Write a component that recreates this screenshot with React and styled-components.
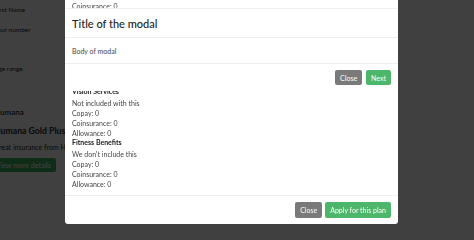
import React from 'react'
import styled, { createGlobalStyle } from 'styled-components'

const GlobalStyle = createGlobalStyle`
  html, body {
    margin: 0;
    padding: 0;
    background: #fff;
    overflow: hidden;
    font-family: Lato, "Open Sans", "Liberation Sans", sans-serif;
    color: #212529;
  }
`

const sections = [
  { title: 'Dental Services', note: 'Included with this', lines: ['Copay: 0', 'Coinsurance: 0', 'Allowance: 0'] },
  { title: 'Hearing Services', note: 'Not included with this', lines: ['Copay: 0', 'Coinsurance: 0', 'Allowance: 0', 'Deductible: 0'], gap: 5 },
  { title: 'Vision Services', note: 'Not included with this', lines: ['Copay: 0', 'Coinsurance: 0', 'Allowance: 0'] },
  { title: 'Fitness Benefits', note: "We don't include this", lines: ['Copay: 0', 'Coinsurance: 0', 'Allowance: 0'] }
]

export default function App() {
  return <>
    <GlobalStyle />
    <Page>
      <Label $gap={5}>First Name</Label>
      <Label $gap={10}>Your number</Label>
      <Label $gap={29}>Age range</Label>
      <Provider>Humana</Provider>
      <PlanName>Humana Gold Plus</PlanName>
      <Blurb>Great insurance from Humana for everyone</Blurb>
      <DetailsButton>View more details</DetailsButton>
    </Page>
    <Backdrop />
    <PlanModal>
      <ModalBody>
        {sections.map(s => <Section key={s.title} $gap={s.gap || 0}>
          <SectionTitle>{s.title}</SectionTitle>
          <Line>{s.note}</Line>
          {s.lines.map(l => <Line key={l}>{l}</Line>)}
        </Section>)}
      </ModalBody>
      <Footer $h={29}>
        <Button $variant="gray">Close</Button>
        <Button $variant="green">Apply for this plan</Button>
      </Footer>
    </PlanModal>
    <StepModal>
      <Header>
        <Title>Title of the modal</Title>
      </Header>
      <StepBody>Body of modal</StepBody>
      <Footer $h={28}>
        <Button $variant="gray" $small>Close</Button>
        <Button $variant="green" $small>Next</Button>
      </Footer>
    </StepModal>
  </>
}

const Page = styled.div`
  display: flex;
  flex-direction: column;
  align-items: flex-start;
  margin-left: -6px;
  width: 200px;
`

const Label = styled.div`
  margin-top: ${p => p.$gap}px;
  font-size: 6.5px;
  line-height: 10px;
`

const Provider = styled.div`
  margin-top: 33px;
  font-size: 8px;
  line-height: 10px;
  font-weight: 600;
`

const PlanName = styled.div`
  margin-top: 8px;
  font-size: 8.7px;
  line-height: 12px;
  font-weight: 700;
`

const Blurb = styled.div`
  margin-top: 5px;
  font-size: 7px;
  line-height: 10px;
  white-space: nowrap;
`

const DetailsButton = styled.div`
  margin-top: 6px;
  margin-left: -3px;
  height: 14px;
  padding: 0 5px;
  display: flex;
  align-items: center;
  background: #3fae5e;
  color: #fff;
  border-radius: 2px;
  font-size: 7px;
`

const Backdrop = styled.div`
  position: fixed;
  inset: 0;
  background: rgba(0, 0, 0, 0.75);
`

const PlanModal = styled.div`
  position: fixed;
  left: 65px;
  top: 0;
  height: 224px;
  width: 333px;
  overflow: hidden;
  display: flex;
  flex-direction: column;
  justify-content: flex-end;
  background: #fff;
  border-radius: 0 0 3px 3px;
`

const ModalBody = styled.div`
  flex-shrink: 0;
  padding: 0 7px 6px;
  display: flex;
  flex-direction: column;
`

const Section = styled.div`
  margin-top: ${p => p.$gap}px;
  display: flex;
  flex-direction: column;
`

const SectionTitle = styled.div`
  font-size: 7px;
  line-height: 8px;
  font-weight: 700;
  margin-bottom: 3px;
  color: #222;
`

const Line = styled.div`
  font-size: 7px;
  line-height: 10px;
  color: #444;
`

const Footer = styled.div`
  flex-shrink: 0;
  height: ${p => p.$h}px;
  box-sizing: border-box;
  border-top: 1px solid #eceeef;
  padding: 0 7px;
  display: flex;
  align-items: center;
  justify-content: flex-end;
  gap: ${p => p.$h === 29 ? 3 : 4}px;
`

const Button = styled.div`
  height: ${p => p.$small ? 15 : 16}px;
  padding: 0 5px;
  display: flex;
  align-items: center;
  border-radius: 2px;
  font-size: 7px;
  color: #fff;
  background: ${p => p.$variant === 'green' ? '#4cb66a' : '#7a7a7a'};
`

const StepModal = styled.div`
  position: fixed;
  top: 8px;
  left: 65px;
  width: 333px;
  background: #fff;
  border-top: 1px solid #f0f0f0;
  border-radius: 2px;
  box-sizing: border-box;
`

const Header = styled.div`
  height: 29px;
  box-sizing: border-box;
  padding: 0 7px;
  display: flex;
  align-items: center;
  border-bottom: 1px solid #eceeef;
`

const Title = styled.div`
  font-size: 11px;
  font-weight: 500;
  color: #222;
`

const StepBody = styled.div`
  height: 25px;
  padding: 0 7px;
  display: flex;
  align-items: center;
  font-size: 7px;
  color: #444;
`
